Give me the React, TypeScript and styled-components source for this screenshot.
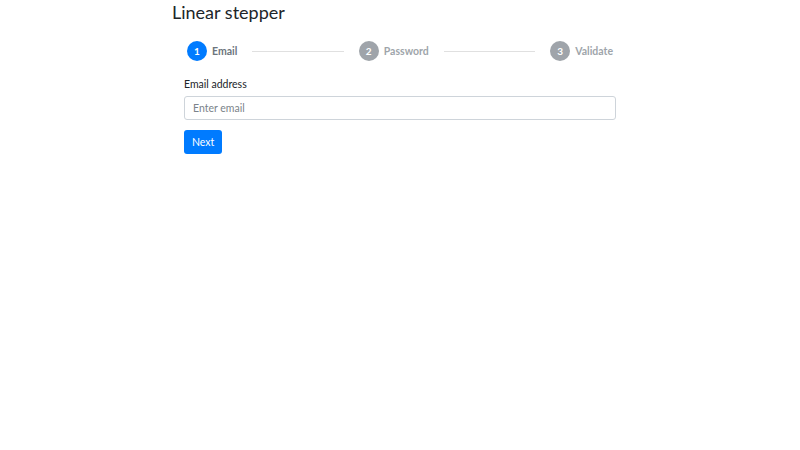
import React from "react";
import styled, { createGlobalStyle } from "styled-components";

const Global = createGlobalStyle`
  html, body { margin: 0; padding: 0; background: #fff; }
  body { font-family: Lato, "Open Sans", "Noto Sans", sans-serif; color: #212529; }
  * { box-sizing: border-box; }
`;

const Page = styled.div`
  width: 472px;
  margin: 0 auto;
`;

const Title = styled.h1`
  margin: 0;
  padding: 0 0 0 8px;
  font-size: 18px;
  font-weight: 400;
  line-height: 24px;
  color: #212529;
`;

const Header = styled.div`
  display: flex;
  align-items: center;
  margin: 17px 8px 0 8px;
  height: 20px;
`;

const Step = styled.div<{ $active?: boolean }>`
  display: inline-flex;
  align-items: center;
  gap: 5px;
  padding: 0 15px;
  opacity: ${(p) => (p.$active ? 1 : 0.65)};
`;

const Circle = styled.span<{ $active?: boolean }>`
  width: 20px;
  height: 20px;
  border-radius: 50%;
  background: ${(p) => (p.$active ? "#007bff" : "#6c757d")};
  color: #fff;
  display: inline-flex;
  align-items: center;
  justify-content: center;
  font-size: 10px;
  font-weight: 700;
  line-height: 1;
`;

const Label = styled.span`
  font-size: 10.5px;
  font-weight: 700;
  color: #6c757d;
`;

const Line = styled.div`
  flex: 1;
  height: 1px;
  background: rgba(0, 0, 0, 0.12);
`;

const Content = styled.div`
  padding: 0 20px;
  margin-top: 16px;
`;

const FieldLabel = styled.label`
  display: block;
  font-size: 10.5px;
  line-height: 14px;
  color: #212529;
  margin-bottom: 5px;
`;

const Input = styled.input`
  display: block;
  width: 100%;
  height: 24px;
  padding: 0 8px;
  border: 1px solid #ced4da;
  border-radius: 3px;
  font-family: inherit;
  font-size: 10.5px;
  color: #495057;
  outline: none;
  &::placeholder { color: #7b838a; }
`;

const Button = styled.button`
  margin-top: 10px;
  height: 24px;
  padding: 0 8px;
  border: none;
  border-radius: 3px;
  background: #007bff;
  color: #fff;
  font-family: inherit;
  font-size: 10.5px;
  cursor: pointer;
`;

const steps = ["Email", "Password", "Validate"];

export default function App() {
  return (
    <>
      <Global />
      <Page>
        <Title>Linear stepper</Title>
        <Header>
          {steps.map((s, i) => (
            <React.Fragment key={s}>
              {i > 0 && <Line />}
              <Step $active={i === 0}>
                <Circle $active={i === 0}>{i + 1}</Circle>
                <Label>{s}</Label>
              </Step>
            </React.Fragment>
          ))}
        </Header>
        <Content>
          <FieldLabel>Email address</FieldLabel>
          <Input placeholder="Enter email" />
          <Button>Next</Button>
        </Content>
      </Page>
    </>
  );
}
